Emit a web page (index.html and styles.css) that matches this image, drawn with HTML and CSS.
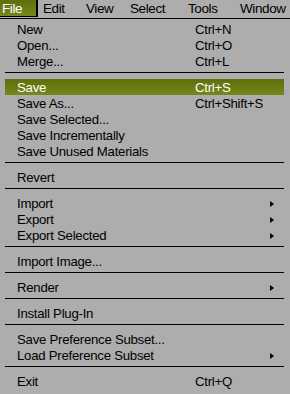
FILE: index.html
```html
<!DOCTYPE html>
<html>
<head>
<meta charset="utf-8">
<link rel="stylesheet" href="styles.css">
</head>
<body>
<div class="menubar">
  <div class="mb-item mb-file active">File</div>
  <div class="mb-item mb-edit">Edit</div>
  <div class="mb-item mb-view">View</div>
  <div class="mb-item mb-select">Select</div>
  <div class="mb-item mb-tools">Tools</div>
  <div class="mb-item mb-window">Window</div>
</div>
<div class="menu">
  <div class="row"><span class="label">New</span><span class="key">Ctrl+N</span></div>
  <div class="row"><span class="label">Open...</span><span class="key">Ctrl+O</span></div>
  <div class="row"><span class="label">Merge...</span><span class="key">Ctrl+L</span></div>
  <div class="sep"></div>
  <div class="row hl"><span class="label">Save</span><span class="key">Ctrl+S</span></div>
  <div class="row"><span class="label">Save As...</span><span class="key">Ctrl+Shift+S</span></div>
  <div class="row"><span class="label">Save Selected...</span></div>
  <div class="row"><span class="label">Save Incrementally</span></div>
  <div class="row"><span class="label">Save Unused Materials</span></div>
  <div class="sep"></div>
  <div class="row"><span class="label">Revert</span></div>
  <div class="sep"></div>
  <div class="row"><span class="label">Import</span><span class="arrow"></span></div>
  <div class="row"><span class="label">Export</span><span class="arrow"></span></div>
  <div class="row"><span class="label">Export Selected</span><span class="arrow"></span></div>
  <div class="sep"></div>
  <div class="row"><span class="label">Import Image...</span></div>
  <div class="sep"></div>
  <div class="row"><span class="label">Render</span><span class="arrow"></span></div>
  <div class="sep"></div>
  <div class="row"><span class="label">Install Plug-In</span></div>
  <div class="sep"></div>
  <div class="row"><span class="label">Save Preference Subset...</span></div>
  <div class="row"><span class="label">Load Preference Subset</span><span class="arrow"></span></div>
  <div class="sep"></div>
  <div class="row"><span class="label">Exit</span><span class="key">Ctrl+Q</span></div>
</div>
</body>
</html>
```
FILE: styles.css
```css
html, body {
  margin: 0;
  padding: 0;
  background: #adadad;
  font-family: "Liberation Sans", Arial, sans-serif;
  color: #000;
  overflow: hidden;
}
.menubar {
  display: flex;
  height: 18px;
  border-bottom: 1px solid #000;
  font-size: 13.5px;
  letter-spacing: -0.4px;
  line-height: 18px;
}
.mb-item {
  box-sizing: border-box;
  padding-left: 5px;
  white-space: nowrap;
}
.mb-file {
  width: 38px;
  padding-left: 2px;
  height: 17px;
  line-height: 16px;
  padding-top: 1px;
  border-right: 2px solid #000;
  border-bottom: 1px solid #000;
}
.active {
  background: linear-gradient(#5e6e0a, #76871c);
  color: #fff;
}
.mb-edit { width: 43px; }
.mb-view { width: 44px; }
.mb-select { width: 58px; }
.mb-tools { width: 52px; }
.mb-window { flex: 1; }

.menu {
  padding: 2px 6px 0 5px;
  font-size: 13.2px;
  letter-spacing: -0.25px;
}
.row {
  display: flex;
  align-items: center;
  height: 16px;
  box-sizing: border-box;
  padding: 2px 0 0 12px;
  line-height: 14px;
  white-space: nowrap;
}
.row.hl {
  background: linear-gradient(#5e6e0a, #76871c);
  color: #fff;
}
.label {
  width: 178px;
  flex: none;
}
.key {
  flex: 1;
}
.arrow {
  margin-left: auto;
  margin-right: 10px;
  width: 0;
  height: 0;
  border-top: 3.5px solid transparent;
  border-bottom: 3.5px solid transparent;
  border-left: 4px solid #000;
}
.sep {
  height: 10px;
  box-sizing: border-box;
  padding-top: 3px;
}
.sep::before {
  content: "";
  display: block;
  height: 1px;
  background: #000;
}
```
